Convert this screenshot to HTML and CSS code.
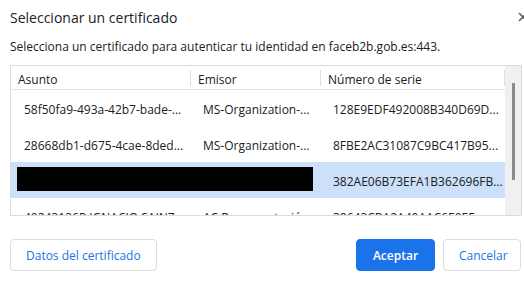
FILE: index.html
```html
<!DOCTYPE html>
<html>
<head>
<link rel="stylesheet" href="styles.css">
</head>
<body>

<div class="dialog">

  <!-- Title bar -->
  <div class="head">
    <h1 class="title">Seleccionar un certificado</h1>
    <span class="close">
      <svg width="10" height="10" viewBox="0 0 10 10"><path d="M1 1L9 9M9 1L1 9" stroke="#5f6368" stroke-width="1.6"/></svg>
    </span>
  </div>

  <p class="desc">Selecciona un certificado para autenticar tu identidad en faceb2b.gob.es:443.</p>

  <!-- Certificate list -->
  <div class="cert-table">
    <div class="table-main">
      <div class="row header">
        <div class="cell c1">Asunto</div>
        <div class="cell c2">Emisor</div>
        <div class="cell c3">Número de serie</div>
      </div>
      <div class="rows">
        <div class="row">
          <div class="cell c1">58f50fa9-493a-42b7-bade-...</div>
          <div class="cell c2">MS-Organization-...</div>
          <div class="cell c3">128E9EDF492008B340D69D...</div>
        </div>
        <div class="row">
          <div class="cell c1">28668db1-d675-4cae-8ded...</div>
          <div class="cell c2">MS-Organization-...</div>
          <div class="cell c3">8FBE2AC31087C9BC417B95...</div>
        </div>
        <div class="row selected">
          <div class="cell c1"></div>
          <div class="cell c2"></div>
          <div class="cell c3">382AE06B73EFA1B362696FB...</div>
          <span class="redact"></span>
        </div>
        <div class="row">
          <div class="cell c1">40243136P IGNACIO SAINZ...</div>
          <div class="cell c2">AC Representación...</div>
          <div class="cell c3">38643CBA2A40AAC6E0EE...</div>
        </div>
      </div>
    </div>
    <div class="scrollbar"><div class="thumb"></div></div>
  </div>

  <!-- Buttons -->
  <div class="actions">
    <button class="btn" type="button">Datos del certificado</button>
    <span class="spacer"></span>
    <button class="btn primary" type="button">Aceptar</button>
    <button class="btn" type="button">Cancelar</button>
  </div>

</div>

</body>
</html>
```

FILE: styles.css
```css
body {
    margin: 0;
    background: #fff;
    font-family: "Open Sans", "Noto Sans", sans-serif;
    color: #202124;
}

.dialog {
    width: 512px;
    padding: 0 2px 0 10px;
}

/* Title bar */
.head {
    display: flex;
    align-items: flex-start;
    height: 32px;
}

.title {
    flex: 1;
    margin: 8px 0 0 0;
    font-size: 14px;
    font-weight: normal;
    line-height: 20px;
}

.close {
    margin: 5px -10px 0 0;
    width: 14px;
}

.desc {
    margin: 6px 0 0 0;
    font-size: 12px;
    line-height: 18px;
}

/* Certificate table */
.cert-table {
    display: flex;
    margin-top: 9px;
    height: 149px;
    border: 1px solid #dadce0;
    overflow: hidden;
}

.table-main {
    flex: 1;
    min-width: 0;
}

.row {
    position: relative;
    display: flex;
    align-items: center;
    height: 36px;
    font-size: 12px;
    white-space: nowrap;
}

.cell {
    overflow: hidden;
    padding-top: 2px;
}

.c1 { width: 180px; padding-left: 13px; box-sizing: border-box; }
.c2 { width: 130px; padding-left: 12px; box-sizing: border-box; }
.c3 { flex: 1; padding-left: 12px; }

.row.header {
    height: 23px;
    border-bottom: 1px solid #e3e3e3;
}

.row.header .cell {
    height: 16px;
    padding-top: 0;
    line-height: 19px;
    overflow: visible;
    border-right: 1px solid #dddddd;
}

.row.header .c1 { padding-left: 7px; }
.row.header .c2 { padding-left: 7px; }
.row.header .c3 { padding-left: 7px; }

.rows {
    height: 125px;
    overflow: hidden;
}

.row.selected {
    background: #cce0f9;
}

.redact {
    position: absolute;
    left: 6px;
    top: 5px;
    width: 296px;
    height: 24px;
    background: #000;
}

.scrollbar {
    position: relative;
    width: 16px;
    background: #f0f0f0;
}

.thumb {
    position: absolute;
    left: 7px;
    top: 17px;
    width: 3px;
    height: 97px;
    background: #8b8b8b;
}

/* Buttons */
.actions {
    display: flex;
    gap: 8px;
    margin: 23px 1px 0 0;
}

.spacer {
    flex: 1;
}

.btn {
    height: 32px;
    padding: 0 15px;
    border: 1px solid #dadce0;
    border-radius: 4px;
    background: #fff;
    color: #1a73e8;
    font-family: "Open Sans", "Noto Sans", sans-serif;
    font-size: 12px;
    font-weight: 500;
}

.btn.primary {
    width: 79px;
    background: #1a73e8;
    border-color: #1a73e8;
    color: #fff;
    font-weight: 600;
}

.btn:last-child {
    width: 78px;
}
```
